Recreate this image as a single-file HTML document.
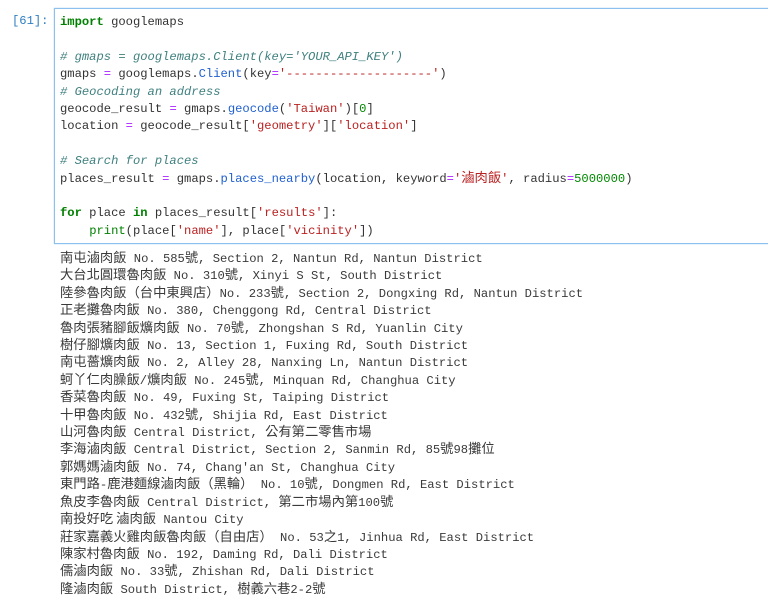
<!DOCTYPE html>
<html><head><meta charset="utf-8"><style>
body{margin:0;background:#fff;width:768px;height:601px;overflow:hidden;position:relative;font-family:"Liberation Mono","Noto Sans CJK TC",monospace;font-size:12.17px;color:#333}
.p{position:absolute;left:12px;top:13px;color:#307fc1;line-height:17.4px}
.box{position:absolute;left:54px;top:8px;width:730px;height:234px;border:1px solid #8cc0ee;box-shadow:0 0 1px #8cc0ee}
.code{position:absolute;left:60px;top:14px;line-height:17.4px;white-space:pre}
.out{position:absolute;left:60px;top:251px;line-height:17.4px;white-space:pre;color:#3a3a3a}
.c{font-family:"Noto Sans CJK TC",sans-serif;font-size:13.3px;line-height:0}
.k{color:#008000;font-weight:bold}.s{color:#ba2121}.m{color:#408080;font-style:italic}.o{color:#aa22ff}.f{color:#2060d0}.n{color:#080}.b{color:#008000}
</style></head><body>
<div class="p">[61]:</div>
<div class="box"></div>
<div class="code"><span class="k">import</span> googlemaps

<span class="m"># gmaps = googlemaps.Client(key='YOUR_API_KEY')</span>
gmaps <span class="o">=</span> googlemaps.<span class="f">Client</span>(key<span class="o">=</span><span class="s">'--------------------'</span>)
<span class="m"># Geocoding an address</span>
geocode_result <span class="o">=</span> gmaps.<span class="f">geocode</span>(<span class="s">'Taiwan'</span>)[<span class="n">0</span>]
location <span class="o">=</span> geocode_result[<span class="s">'geometry'</span>][<span class="s">'location'</span>]

<span class="m"># Search for places</span>
places_result <span class="o">=</span> gmaps.<span class="f">places_nearby</span>(location, keyword<span class="o">=</span><span class="s">'<span class="c">滷肉飯</span>'</span>, radius<span class="o">=</span><span class="n">5000000</span>)

<span class="k">for</span> place <span class="k">in</span> places_result[<span class="s">'results'</span>]:
    <span class="b">print</span>(place[<span class="s">'name'</span>], place[<span class="s">'vicinity'</span>])</div>
<div class="out"><span class="c">南屯滷肉飯</span> No. 585<span class="c">號</span>, Section 2, Nantun Rd, Nantun District
<span class="c">大台北圓環魯肉飯</span> No. 310<span class="c">號</span>, Xinyi S St, South District
<span class="c">陸參魯肉飯（台中東興店）</span>No. 233<span class="c">號</span>, Section 2, Dongxing Rd, Nantun District
<span class="c">正老攤魯肉飯</span> No. 380, Chenggong Rd, Central District
<span class="c">魯肉張豬腳飯爌肉飯</span> No. 70<span class="c">號</span>, Zhongshan S Rd, Yuanlin City
<span class="c">樹仔腳爌肉飯</span> No. 13, Section 1, Fuxing Rd, South District
<span class="c">南屯薔爌肉飯</span> No. 2, Alley 28, Nanxing Ln, Nantun District
<span class="c">蚵丫仁肉臊飯</span>/<span class="c">爌肉飯</span> No. 245<span class="c">號</span>, Minquan Rd, Changhua City
<span class="c">香菜魯肉飯</span> No. 49, Fuxing St, Taiping District
<span class="c">十甲魯肉飯</span> No. 432<span class="c">號</span>, Shijia Rd, East District
<span class="c">山河魯肉飯</span> Central District, <span class="c">公有第二零售市場</span>
<span class="c">李海滷肉飯</span> Central District, Section 2, Sanmin Rd, 85<span class="c">號</span>98<span class="c">攤位</span>
<span class="c">郭媽媽滷肉飯</span> No. 74, Chang'an St, Changhua City
<span class="c">東門路</span>-<span class="c">鹿港麵線滷肉飯（黑輪）</span> No. 10<span class="c">號</span>, Dongmen Rd, East District
<span class="c">魚皮李魯肉飯</span> Central District, <span class="c">第二市場內第</span>100<span class="c">號</span>
<span class="c">南投好吃 滷肉飯</span> Nantou City
<span class="c">莊家嘉義火雞肉飯魯肉飯（自由店）</span> No. 53<span class="c">之</span>1, Jinhua Rd, East District
<span class="c">陳家村魯肉飯</span> No. 192, Daming Rd, Dali District
<span class="c">儒滷肉飯</span> No. 33<span class="c">號</span>, Zhishan Rd, Dali District
<span class="c">隆滷肉飯</span> South District, <span class="c">樹義六巷</span>2-2<span class="c">號</span></div>
</body></html>
